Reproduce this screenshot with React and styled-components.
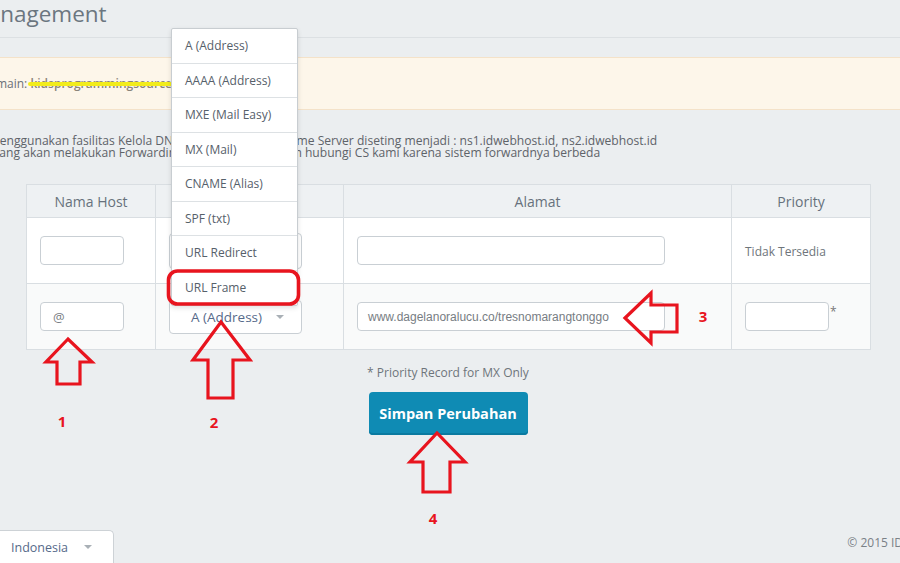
import React from "react";
import styled, { createGlobalStyle } from "styled-components";

const GlobalStyle = createGlobalStyle`
  html, body {
    margin: 0;
    padding: 0;
    background: #ebeef0;
  }
  body {
    font-family: "Open Sans", "Noto Sans", sans-serif;
    color: #5c6770;
  }
`;

const recordTypes = [
  "A (Address)",
  "AAAA (Address)",
  "MXE (Mail Easy)",
  "MX (Mail)",
  "CNAME (Alias)",
  "SPF (txt)",
  "URL Redirect",
  "URL Frame",
];

const App = () => {
  return (
    <>
      <GlobalStyle />
      <Page>
        <Header>
          <Title>DNS Management</Title>
        </Header>

        <Alert>
          Domain: <Struck>kidsprogrammingsource.com</Struck>
        </Alert>

        <Notes>
          <NoteLine>
            Jika menggunakan fasilitas Kelola DNS, mohon pastikan Name Server diseting menjadi : ns1.idwebhost.id, ns2.idwebhost.id
          </NoteLine>
          <NoteLine>
            Bagi yang akan melakukan Forwarding domainnya, silahkan hubungi CS kami karena sistem forwardnya berbeda
          </NoteLine>
        </Notes>

        <Table>
          <colgroup>
            <col style={{ width: 129 }} />
            <col style={{ width: 188 }} />
            <col style={{ width: 388 }} />
            <col style={{ width: 139 }} />
          </colgroup>
          <thead>
            <tr>
              <Th>Nama Host</Th>
              <Th>Type</Th>
              <Th>Alamat</Th>
              <Th>Priority</Th>
            </tr>
          </thead>
          <tbody>
            <Row>
              <Td>
                <Input $w={84} />
              </Td>
              <Td>
                <Select $tall>
                  <span>A (Address)</span>
                  <Caret />
                </Select>
              </Td>
              <Td>
                <Input $w={308} />
              </Td>
              <Td>
                <Muted>Tidak Tersedia</Muted>
              </Td>
            </Row>
            <Row $alt>
              <Td>
                <Input $w={84}>@</Input>
              </Td>
              <Td>
                <Select>
                  <span>A (Address)</span>
                  <Caret />
                </Select>
              </Td>
              <Td>
                <Input $w={308} $url>
                  www.dagelanoralucu.co/tresnomarangtonggo
                </Input>
              </Td>
              <Td>
                <PriorityWrap>
                  <Input $w={84} />
                  <Star>*</Star>
                </PriorityWrap>
              </Td>
            </Row>
          </tbody>
        </Table>

        <Footnote>* Priority Record for MX Only</Footnote>
        <ButtonRow>
          <SaveButton>Simpan Perubahan</SaveButton>
        </ButtonRow>

        <Footer>
          <LangSelect>
            <span>Indonesia</span>
            <Caret />
          </LangSelect>
          <Copyright>© 2015 IDwebhost</Copyright>
        </Footer>

        <Menu>
          {recordTypes.map((t) => (
            <MenuItem key={t}>{t}</MenuItem>
          ))}
        </Menu>

        <Annotations viewBox="0 0 900 563">
          <rect x="168.5" y="271" width="130" height="33" rx="9" />
          <path d="M68 339 L46 362 L57 362 L57 384 L80 384 L80 362 L92 362 Z" />
          <path d="M221 322 L193 360 L208 360 L208 398 L233 398 L233 360 L250 360 Z" />
          <path d="M625 318 L651 293 L651 305 L677 305 L677 332 L651 332 L651 343 Z" />
          <path d="M437 433 L410 462 L423 462 L423 492 L450 492 L450 462 L465 462 Z" />
          <text x="62" y="427">1</text>
          <text x="214" y="428">2</text>
          <text x="703" y="322">3</text>
          <text x="433" y="524">4</text>
        </Annotations>
      </Page>
    </>
  );
};

export default App;

const Page = styled.div`
  position: relative;
  width: 900px;
  height: 563px;
  overflow: hidden;
  background: #ebeef0;
`;

const Header = styled.div`
  height: 38px;
  border-bottom: 1px solid #dce0e3;
  box-sizing: border-box;
`;

const Title = styled.h1`
  margin: 0 0 0 -84px;
  padding-top: 0;
  font-size: 22.5px;
  font-weight: 400;
  line-height: 28px;
  color: #6b7680;
  white-space: nowrap;
`;

const Alert = styled.div`
  margin-top: 19px;
  height: 53px;
  box-sizing: border-box;
  display: flex;
  align-items: center;
  margin-left: -20px;
  background: #fdf6ea;
  border-top: 1px solid #f4e2c9;
  border-bottom: 1px solid #f4e2c9;
  font-size: 12px;
  color: #6b7178;
  white-space: pre;
`;

const Struck = styled.span`
  position: relative;
  color: #8a847a;
  font-weight: 600;
  &::after {
    content: "";
    position: absolute;
    left: -2px;
    right: -6px;
    top: 50%;
    height: 4px;
    margin-top: -2px;
    background: #f2ec1c;
    border-radius: 2px;
  }
`;

const Notes = styled.div`
  margin-top: 25px;
  margin-left: -34px;
  font-size: 12.1px;
  line-height: 12px;
  color: #5e6369;
  white-space: nowrap;
`;

const NoteLine = styled.div``;

const Table = styled.table`
  margin: 25px 0 0 26px;
  width: 845px;
  border-collapse: collapse;
  table-layout: fixed;
  font-size: 13px;
`;

const Th = styled.th`
  height: 32px;
  padding: 0;
  font-weight: 400;
  font-size: 14px;
  color: #67727c;
  background: #eef1f3;
  border: 1px solid #d9dee2;
  text-align: center;
`;

const Row = styled.tr`
  height: 66px;
  background: ${(p) => (p.$alt ? "#f9fafa" : "#ffffff")};
`;

const Td = styled.td`
  padding: 0 0 0 13px;
  border: 1px solid #d9dee2;
  vertical-align: middle;
`;

const Input = styled.div`
  width: ${(p) => p.$w}px;
  height: 29px;
  box-sizing: border-box;
  border: 1px solid #c9cfd4;
  border-radius: 4px;
  background: #fff;
  display: flex;
  align-items: center;
  padding-left: ${(p) => (p.$url ? 10 : 12)}px;
  font-family: ${(p) =>
    p.$url ? '"Liberation Sans", Arial, sans-serif' : '"Open Sans", sans-serif'};
  font-size: ${(p) => (p.$url ? 12 : 13)}px;
  color: #777d83;
  white-space: nowrap;
`;

const Select = styled.div`
  width: 133px;
  height: ${(p) => (p.$tall ? 36 : 34)}px;
  box-sizing: border-box;
  border: 1px solid #c9cfd4;
  border-radius: 4px;
  background: #fff;
  display: flex;
  align-items: center;
  justify-content: center;
  gap: 14px;
  padding-left: 4px;
  font-size: 13.5px;
  color: #566a8a;
`;

const Caret = styled.span`
  width: 0;
  height: 0;
  border-left: 4px solid transparent;
  border-right: 4px solid transparent;
  border-top: 4px solid #a9b0b6;
`;

const Muted = styled.span`
  font-size: 12px;
  color: #6e757b;
`;

const PriorityWrap = styled.div`
  display: flex;
  align-items: flex-start;
  gap: 1px;
`;

const Star = styled.span`
  font-size: 12px;
  line-height: 20px;
  color: #777;
`;

const Footnote = styled.div`
  margin-top: 16px;
  width: 896px;
  text-align: center;
  font-size: 12px;
  line-height: 14px;
  color: #6e757b;
`;

const ButtonRow = styled.div`
  display: flex;
  justify-content: center;
  width: 896px;
  margin-top: 12px;
`;

const SaveButton = styled.button`
  width: 159px;
  height: 43px;
  padding: 0;
  border: none;
  border-radius: 4px;
  background: #0f8bb4;
  box-shadow: inset 0 -2px 0 #0a7aa0;
  color: #fff;
  font-family: "Open Sans", sans-serif;
  font-weight: 700;
  font-size: 14.5px;
`;

const Footer = styled.div`
  position: absolute;
  left: 0;
  right: 0;
  bottom: 0;
  height: 34px;
  display: flex;
  justify-content: space-between;
  align-items: flex-end;
`;

const LangSelect = styled.div`
  width: 114px;
  height: 33px;
  box-sizing: border-box;
  background: #fff;
  border: 1px solid #cdd2d6;
  border-left: none;
  border-bottom: none;
  border-top-right-radius: 5px;
  display: flex;
  align-items: center;
  gap: 16px;
  padding-left: 11px;
  font-size: 12.5px;
  color: #566a8a;
`;

const Copyright = styled.div`
  margin-right: -51px;
  margin-bottom: 12px;
  font-size: 12px;
  color: #7a8187;
  white-space: nowrap;
`;

const Menu = styled.ul`
  position: absolute;
  left: 171px;
  top: 28px;
  width: 125px;
  margin: 0;
  padding: 0;
  list-style: none;
  background: #fff;
  border: 1px solid #c8cdd1;
  border-radius: 2px;
  box-shadow: 0 2px 5px rgba(0, 0, 0, 0.12);
`;

const MenuItem = styled.li`
  height: 34.5px;
  box-sizing: border-box;
  display: flex;
  align-items: center;
  padding-left: 13px;
  font-size: 12px;
  color: #56606a;
  border-bottom: 1px solid #dde1e4;
  &:last-child {
    border-bottom: none;
  }
`;

const Annotations = styled.svg`
  position: absolute;
  left: 0;
  top: 0;
  width: 900px;
  height: 563px;
  pointer-events: none;
  rect,
  path {
    fill: none;
    stroke: #e8141e;
    stroke-width: 3.2;
    stroke-linejoin: miter;
  }
  rect {
    stroke-width: 3.6;
  }
  text {
    fill: #e8141e;
    font-family: "Open Sans", sans-serif;
    font-weight: 700;
    font-size: 15px;
    text-anchor: middle;
  }
`;
